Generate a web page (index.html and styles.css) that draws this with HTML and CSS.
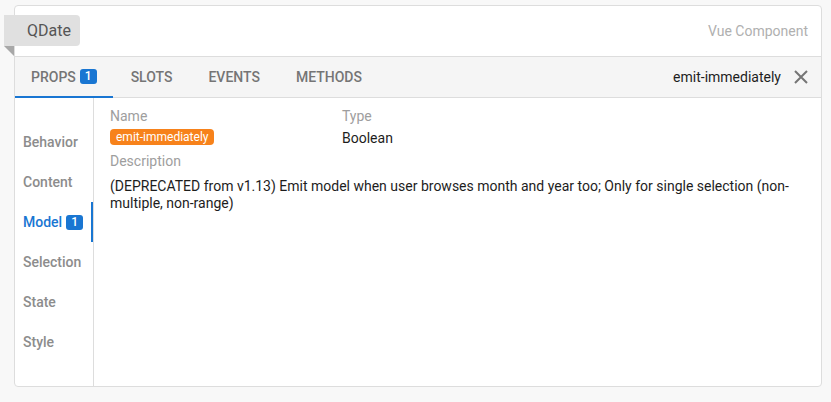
FILE: index.html
```html
<!DOCTYPE html>
<html lang="en">
<head>
    <meta charset="UTF-8">
    <title>QDate API</title>
    <link rel="stylesheet" href="styles.css">
</head>
<body>
    <div class="card">
        <div class="card-header">
            <div class="tag">QDate</div>
            <div class="kind">Vue Component</div>
        </div>
        <div class="tabs">
            <div class="tab active">PROPS <span class="count">1</span></div>
            <div class="tab">SLOTS</div>
            <div class="tab">EVENTS</div>
            <div class="tab">METHODS</div>
            <div class="filter">
                <span>emit-immediately</span>
                <svg class="close" width="16" height="16" viewBox="0 0 16 16">
                    <path d="M2 2 L14 14 M14 2 L2 14" stroke="#757575" stroke-width="2" fill="none"/>
                </svg>
            </div>
        </div>
        <div class="body">
            <div class="side">
                <div class="side-item">Behavior</div>
                <div class="side-item">Content</div>
                <div class="side-item active">Model <span class="count">1</span></div>
                <div class="side-item">Selection</div>
                <div class="side-item">State</div>
                <div class="side-item">Style</div>
            </div>
            <div class="content">
                <div class="row">
                    <div class="cell name">
                        <div class="label">Name</div>
                        <span class="prop">emit-immediately</span>
                    </div>
                    <div class="cell">
                        <div class="label">Type</div>
                        <div class="value">Boolean</div>
                    </div>
                </div>
                <div class="label desc">Description</div>
                <div class="value">(DEPRECATED from v1.13) Emit model when user browses month and year too; Only for single selection (non-multiple, non-range)</div>
            </div>
        </div>
    </div>
</body>
</html>
```
FILE: styles.css
```css
body {
    margin: 0;
    padding: 5px 0 0 14px;
    background: #f8f8f8;
    font-family: Roboto, "Liberation Sans", sans-serif;
    font-size: 14px;
    color: #1d1d1d;
}

.card {
    width: 806px;
    height: 380px;
    background: #fff;
    border: 1px solid #ddd;
    border-radius: 4px;
    display: flex;
    flex-direction: column;
}

.card-header {
    height: 50px;
    display: flex;
    justify-content: space-between;
    align-items: center;
    border-bottom: 1px solid #ddd;
    position: relative;
}

.tag {
    position: absolute;
    left: -11px;
    top: 9px;
    height: 31px;
    line-height: 31px;
    padding: 0 9px 0 23px;
    background: #e0e0e0;
    border-radius: 0 4px 4px 0;
    font-size: 16px;
    color: #555;
}

.tag::after {
    content: "";
    position: absolute;
    left: 0;
    top: 31px;
    border-top: 10px solid #a8a8a8;
    border-left: 10px solid transparent;
}

.kind {
    margin-left: auto;
    padding-right: 13px;
    color: #b0b0b0;
    font-size: 14px;
}

.tabs {
    height: 40px;
    background: #f5f5f5;
    border-bottom: 1px solid #ddd;
    display: flex;
    align-items: stretch;
}

.tab {
    display: flex;
    align-items: center;
    padding: 0 18px;
    font-weight: 500;
    color: #757575;
    border-bottom: 2px solid transparent;
    margin-bottom: -1px;
}

.tab:first-child {
    padding: 0 16px 0 16px;
}

.tab.active {
    border-bottom-color: #1976d2;
}

.count {
    display: inline-block;
    background: #1976d2;
    color: #fff;
    font-size: 12px;
    line-height: 15px;
    padding: 0 5px;
    border-radius: 3px;
    margin-left: 4px;
}

.filter {
    margin-left: auto;
    display: flex;
    align-items: center;
    gap: 12px;
    padding-right: 12px;
    color: #1d1d1d;
}

.close {
    display: block;
}

.body {
    flex: 1;
    display: flex;
}

.side {
    width: 78px;
    border-right: 1px solid #ddd;
    padding-top: 24px;
}

.side-item {
    height: 40px;
    display: flex;
    align-items: center;
    padding-left: 8px;
    font-weight: 500;
    color: #8c8c8c;
}

.side-item.active {
    color: #1976d2;
    box-shadow: inset -2px 0 0 #1976d2;
}

.content {
    flex: 1;
    padding: 10px 16px 0 16px;
    line-height: 17px;
}

.row {
    display: flex;
    margin-bottom: 6px;
}

.cell.name {
    width: 232px;
}

.label {
    color: #9e9e9e;
}

.label.desc {
    margin-bottom: 8px;
}

.value {
    color: #1d1d1d;
}

.prop {
    display: inline-block;
    background: #f7821b;
    color: #fff;
    font-size: 12px;
    line-height: 16px;
    padding: 0 6px;
    border-radius: 4px;
    margin-top: 4px;
}

.cell .value {
    margin-top: 5px;
}
```
